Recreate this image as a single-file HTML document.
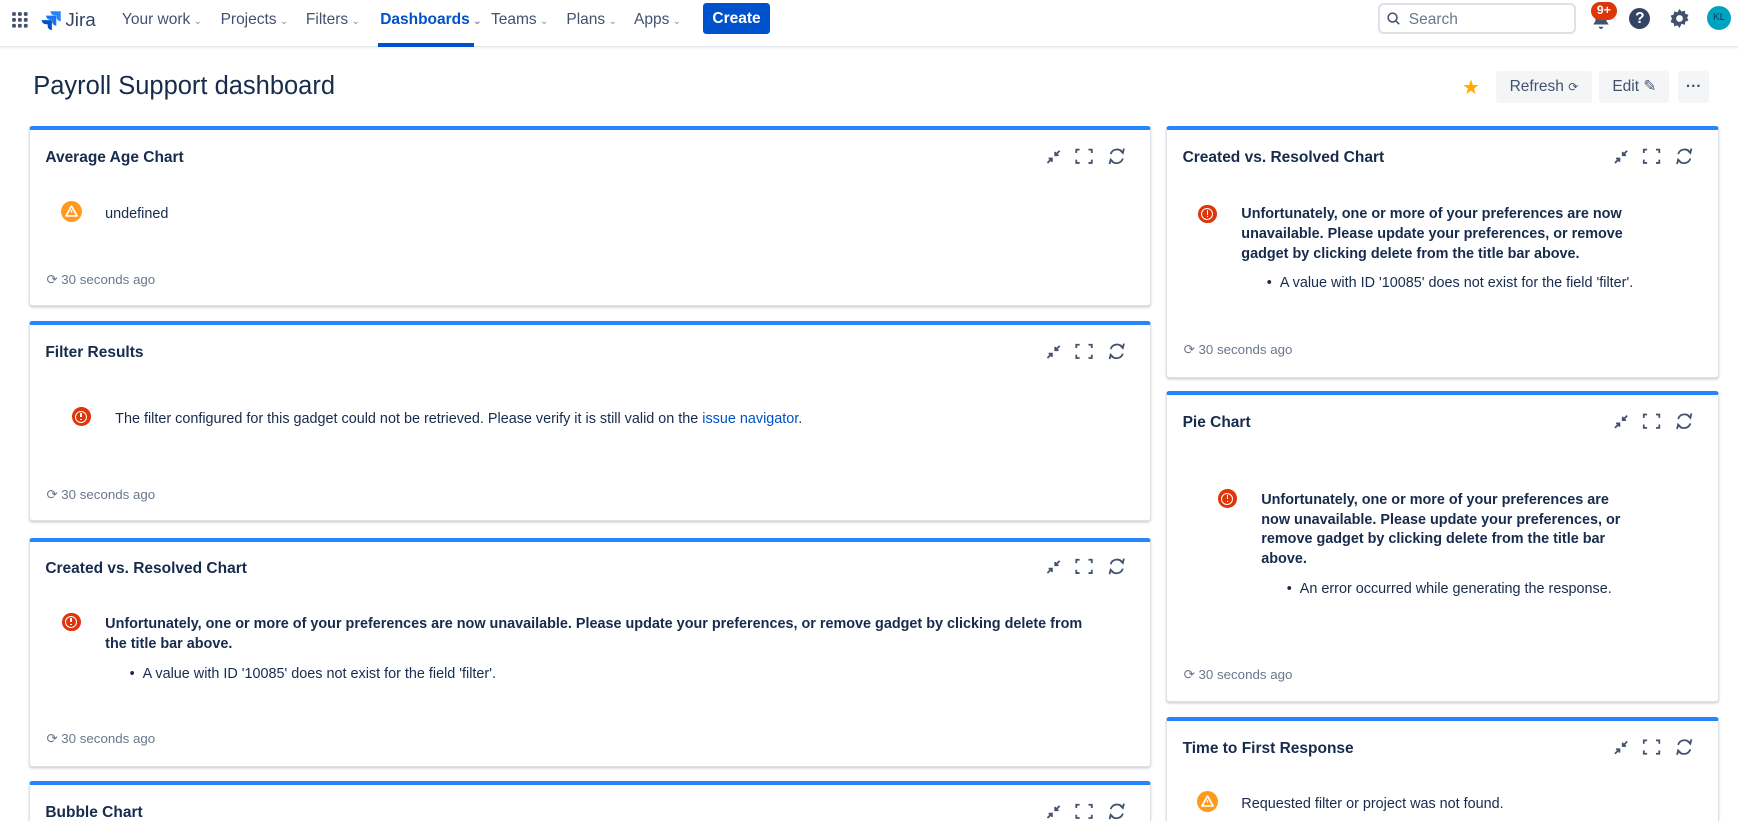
<!DOCTYPE html>
<html><head><meta charset="utf-8"><style>
*{box-sizing:border-box;margin:0;padding:0}
html,body{width:1738px;height:821px;overflow:hidden;background:#fff}
#root{zoom:1.10842;width:1568px;height:741px;position:relative;font-family:"Liberation Sans",Arial,sans-serif;color:#172B4D;overflow:hidden}
.abs{position:absolute}
.nav{position:absolute;left:0;top:0;width:1568px;height:42px;border-bottom:1px solid #e4e6ea;box-shadow:0 1px 2px rgba(9,30,66,.08)}
.mi{position:absolute;top:10px;font-size:14px;color:#42526E;white-space:nowrap}
.mi .c{font-size:9px;color:#8993a4;margin-left:3px}
.g{position:absolute;background:#fff;border:1px solid #dfe1e6;border-top:4px solid #2684FF;border-radius:3px;box-shadow:0 1px 2px rgba(9,30,66,.2);overflow:hidden}
.gt{position:absolute;left:14px;top:17px;font-size:14px;font-weight:bold;color:#172B4D}
.ft{position:absolute;font-size:12px;color:#6B778C;white-space:nowrap}
.t{position:absolute;font-size:13px;white-space:nowrap;line-height:18px}
.b{font-weight:bold}
.err{position:absolute;width:17px;height:17px;border-radius:50%;background:#DE350B;}
.err:after{content:"";position:absolute;left:3px;top:3px;width:9px;height:9px;border:1.5px solid #fff;border-radius:50%}
.err i{position:absolute;left:7.7px;top:5px;width:1.6px;height:4px;background:#fff;z-index:2}
.err b{position:absolute;left:7.7px;top:10px;width:1.6px;height:1.6px;background:#fff;z-index:2}
.warn{position:absolute;width:19px;height:19px;border-radius:50%;background:#FF991F}
.btn{position:absolute;top:64px;height:29px;background:#F4F5F7;border-radius:3px;font-size:14px;color:#42526E;line-height:29px;text-align:center}
</style></head><body><div id="root">
<div class="nav">
<svg class="abs" style="left:10px;top:10px" width="16" height="16" viewBox="0 0 16 16" fill="#42526E"><g><rect x="1" y="1" width="3.4" height="3.4" rx="1"/><rect x="6.3" y="1" width="3.4" height="3.4" rx="1"/><rect x="11.6" y="1" width="3.4" height="3.4" rx="1"/><rect x="1" y="6.3" width="3.4" height="3.4" rx="1"/><rect x="6.3" y="6.3" width="3.4" height="3.4" rx="1"/><rect x="11.6" y="6.3" width="3.4" height="3.4" rx="1"/><rect x="1" y="11.6" width="3.4" height="3.4" rx="1"/><rect x="6.3" y="11.6" width="3.4" height="3.4" rx="1"/><rect x="11.6" y="11.6" width="3.4" height="3.4" rx="1"/></g></svg>
<svg class="abs" style="left:36px;top:8px" width="20" height="20" viewBox="0 0 20 20"><path d="M18 2H9.5a3.8 3.8 0 0 0 3.8 3.8h1.6v1.5a3.8 3.8 0 0 0 3.8 3.8V2z" fill="#2684FF"/><path d="M14 6H5.5a3.8 3.8 0 0 0 3.8 3.8h1.6v1.5a3.8 3.8 0 0 0 3.8 3.8V6z" fill="#1f74eb"/><path d="M10 10H1.5a3.8 3.8 0 0 0 3.8 3.8h1.6v1.5a3.8 3.8 0 0 0 3.8 3.8V10z" fill="#0052CC"/></svg>
<div class="abs" style="left:59px;top:8px;font-size:17px;color:#344563">Jira</div>
<div class="mi" style="left:110px">Your work<span class="c">⌄</span></div>
<div class="mi" style="left:199px">Projects<span class="c">⌄</span></div>
<div class="mi" style="left:276px">Filters<span class="c">⌄</span></div>
<div class="mi" style="left:343px;color:#0052CC;font-weight:bold">Dashboards<span class="c">⌄</span></div>
<div class="abs" style="left:341px;top:39px;width:87px;height:3px;background:#0052CC"></div>
<div class="mi" style="left:443px">Teams<span class="c">⌄</span></div>
<div class="mi" style="left:511px">Plans<span class="c">⌄</span></div>
<div class="mi" style="left:572px">Apps<span class="c">⌄</span></div>
<div class="abs" style="left:634px;top:3px;width:61px;height:28px;background:#0052CC;border-radius:3px;color:#fff;font-weight:bold;font-size:14px;text-align:center;line-height:28px">Create</div>
<div class="abs" style="left:1243px;top:3px;width:179px;height:28px;border:2px solid #DFE1E6;border-radius:5px"></div>
<svg class="abs" style="left:1251px;top:11px" width="12" height="12" viewBox="0 0 12 12"><circle cx="5" cy="5" r="4" fill="none" stroke="#42526E" stroke-width="1.4"/><path d="M8 8l3 3" stroke="#42526E" stroke-width="1.4"/></svg>
<div class="abs" style="left:1271px;top:10px;font-size:14px;color:#6B778C">Search</div>
<svg class="abs" style="left:1435px;top:8px" width="18" height="20" viewBox="0 0 18 20"><path d="M9 2c-3 0-5 2.5-5 5v4l-2 3h14l-2-3V7c0-2.5-2-5-5-5zM7 16h4a2 2 0 0 1-4 0z" fill="#42526E"/></svg>
<div class="abs" style="left:1435px;top:2px;width:24px;height:16px;background:#DE350B;border-radius:8px;color:#fff;font-size:11px;font-weight:bold;text-align:center;line-height:16px">9+</div>
<div class="abs" style="left:1470px;top:7px;width:19px;height:19px;border-radius:50%;background:#344563;color:#fff;font-weight:bold;font-size:14px;text-align:center;line-height:19px">?</div>
<svg class="abs" style="left:1506px;top:7px" width="19" height="19" viewBox="0 0 20 20"><path d="M10 1l2 2.5 3-1 .5 3 3 1-1.3 2.8 1.3 2.7-3 1-.5 3-3-1L10 19l-2-2.5-3 1-.5-3-3-1L2.8 10 1.5 7.2l3-1 .5-3 3 1z" fill="#42526E"/><circle cx="10" cy="10" r="3.2" fill="#fff"/></svg>
<div class="abs" style="left:1540px;top:5px;width:22px;height:22px;border-radius:50%;background:#00A3BF;color:#253858;font-size:9px;text-align:center;line-height:22px">KL</div>
</div>
<div class="abs" style="left:30px;top:65px;font-size:23px;color:#172B4D">Payroll Support dashboard</div>
<div class="abs" style="left:1319px;top:68px;font-size:18px;color:#FFAB00">★</div>
<div class="btn" style="left:1350px;width:86px">Refresh <span style="font-size:11px">⟳</span></div>
<div class="btn" style="left:1443px;width:63px">Edit ✎</div>
<div class="btn" style="left:1514px;width:28px;font-weight:bold">···</div>

<div class="g" style="left:26px;top:114px;width:1012px;height:162px">
<div class="gt">Average Age Chart</div>
<div class="warn" style="left:28px;top:64px"><svg width="19" height="19" viewBox="0 0 19 19"><path d="M9.5 4.5L14.5 13.5H4.5z" fill="none" stroke="#fff" stroke-width="1.5" stroke-linejoin="round"/><path d="M9.5 8v2.5" stroke="#fff" stroke-width="1.3"/></svg></div>
<div class="t" style="left:68px;top:67px">undefined</div>
<div class="ft" style="left:15px;top:128px">⟳ 30 seconds ago</div>
</div>
<div class="g" style="left:26px;top:290px;width:1012px;height:180px">
<div class="gt">Filter Results</div>
<div class="err" style="left:38px;top:74px"><i></i><b></b></div>
<div class="t" style="left:77px;top:76px">The filter configured for this gadget could not be retrieved. Please verify it is still valid on the <span style="color:#0052CC">issue navigator</span>.</div>
<div class="ft" style="left:15px;top:146px">⟳ 30 seconds ago</div>
</div>
<div class="g" style="left:26px;top:485px;width:1012px;height:207px">
<div class="gt">Created vs. Resolved Chart</div>
<div class="err" style="left:29px;top:64px"><i></i><b></b></div>
<div class="t b" style="left:68px;top:66px">Unfortunately, one or more of your preferences are now unavailable. Please update your preferences, or remove gadget by clicking delete from<br>the title bar above.</div>
<div class="t" style="left:90px;top:111px">•&nbsp;&nbsp;A value with ID '10085' does not exist for the field 'filter'.</div>
<div class="ft" style="left:15px;top:171px">⟳ 30 seconds ago</div>
</div>
<div class="g" style="left:26px;top:705px;width:1012px;height:60px">
<div class="gt">Bubble Chart</div>
</div>

<div class="g" style="left:1052px;top:114px;width:499px;height:227px">
<div class="gt">Created vs. Resolved Chart</div>
<div class="err" style="left:28px;top:67px"><i></i><b></b></div>
<div class="t b" style="left:67px;top:67px">Unfortunately, one or more of your preferences are now<br>unavailable. Please update your preferences, or remove<br>gadget by clicking delete from the title bar above.</div>
<div class="t" style="left:90px;top:130px">•&nbsp;&nbsp;A value with ID '10085' does not exist for the field 'filter'.</div>
<div class="ft" style="left:15px;top:191px">⟳ 30 seconds ago</div>
</div>
<div class="g" style="left:1052px;top:353px;width:499px;height:280px">
<div class="gt">Pie Chart</div>
<div class="err" style="left:46px;top:85px"><i></i><b></b></div>
<div class="t b" style="left:85px;top:86px">Unfortunately, one or more of your preferences are<br>now unavailable. Please update your preferences, or<br>remove gadget by clicking delete from the title bar<br>above.</div>
<div class="t" style="left:108px;top:167px">•&nbsp;&nbsp;An error occurred while generating the response.</div>
<div class="ft" style="left:15px;top:245px">⟳ 30 seconds ago</div>
</div>
<div class="g" style="left:1052px;top:647px;width:499px;height:120px">
<div class="gt">Time to First Response</div>
<div class="warn" style="left:27px;top:63px"><svg width="19" height="19" viewBox="0 0 19 19"><path d="M9.5 4.5L14.5 13.5H4.5z" fill="none" stroke="#fff" stroke-width="1.5" stroke-linejoin="round"/><path d="M9.5 8v2.5" stroke="#fff" stroke-width="1.3"/></svg></div>
<div class="t" style="left:67px;top:67px">Requested filter or project was not found.</div>
</div>

<svg class="abs" style="left:0;top:0" width="1568" height="741">
<defs><g id="hi" fill="none" stroke="#42526E" stroke-width="1.6">
<path d="M-6 6l4-4M-5 2h3v3M5-5L1-1M1-4v3h3"/>
<path d="M23-6h-3v3M31-6h3v3M23 6h-3v-3M31 6h3v-3"/>
<path d="M51-2a6 6 0 0 1 11-1M62 2a6 6 0 0 1-11 1M59-6l3 3 1-4M54 6l-3-3-1 4"/>
</g></defs>
<use href="#hi" x="951" y="141"/><use href="#hi" x="951" y="317"/><use href="#hi" x="951" y="511"/><use href="#hi" x="951" y="732"/>
<use href="#hi" x="1463" y="141"/><use href="#hi" x="1463" y="380"/><use href="#hi" x="1463" y="674"/>
</svg>
</div></body></html>
